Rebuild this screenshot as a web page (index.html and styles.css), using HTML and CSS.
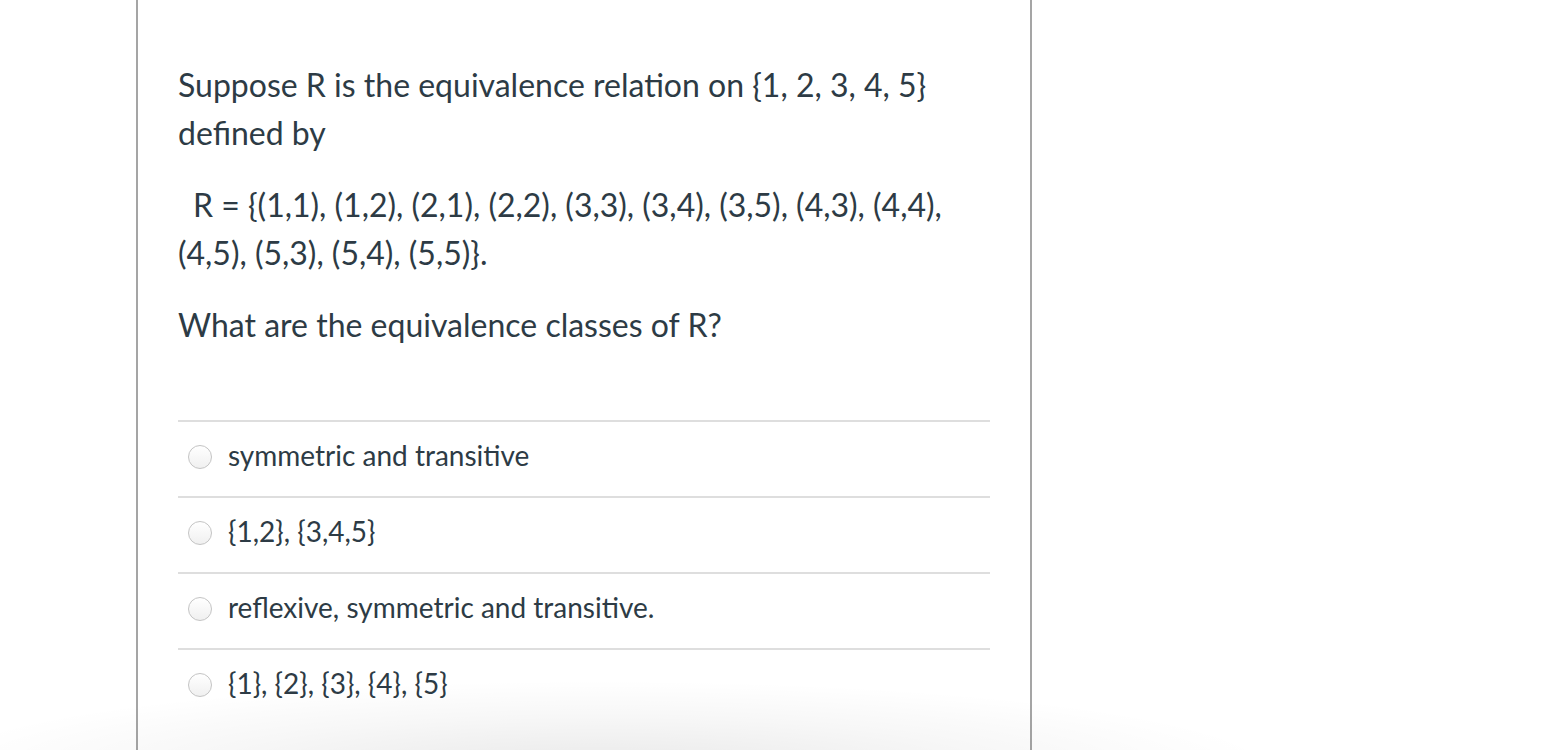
FILE: index.html
```html
<!DOCTYPE html>
<html>
<head>
<meta charset="utf-8">
<link rel="stylesheet" href="styles.css">
</head>
<body>
<div class="page">
  <div class="card">
    <div class="question">
      <p>Suppose R is the equivalence relation on {1, 2, 3, 4, 5} defined by</p>
      <p class="indent">R = {(1,1), (1,2), (2,1), (2,2), (3,3), (3,4), (3,5), (4,3), (4,4), (4,5), (5,3), (5,4), (5,5)}.</p>
      <p>What are the equivalence classes of R?</p>
    </div>
    <div class="answers">
      <label class="answer"><span class="radio"></span><span class="atext">symmetric and transitive</span></label>
      <label class="answer"><span class="radio"></span><span class="atext">{1,2}, {3,4,5}</span></label>
      <label class="answer"><span class="radio"></span><span class="atext">reflexive, symmetric and transitive.</span></label>
      <label class="answer"><span class="radio"></span><span class="atext">{1}, {2}, {3}, {4}, {5}</span></label>
    </div>
  </div>
  <div class="shade"></div>
</div>
</body>
</html>
```
FILE: styles.css
```css
html, body {
  margin: 0;
  padding: 0;
  background: #fff;
  height: 750px;
  overflow: hidden;
}
.page {
  position: relative;
  height: 750px;
  overflow: hidden;
  font-family: Lato, "Open Sans", sans-serif;
  color: #2d3b45;
}
.card {
  margin-left: 136px;
  width: 896px;
  height: 750px;
  box-sizing: border-box;
  border-left: 2px solid #a5a5a5;
  border-right: 2px solid #a5a5a5;
  padding: 61px 40px 0 40px;
}
.question p {
  margin: 0 0 24px 0;
  font-size: 32px;
  line-height: 48px;
}
.question p.indent {
  text-indent: 15px;
}
.answers {
  margin-top: 71px;
}
.answer {
  display: flex;
  align-items: center;
  height: 74px;
  border-top: 2px solid #dedede;
  font-size: 28px;
}
.answer .atext {
  position: relative;
  top: -4px;
}
.answer .radio {
  position: relative;
  top: -2px;
}
.radio {
  width: 22px;
  height: 22px;
  border-radius: 50%;
  border: 1px solid #c4c4c4;
  background: linear-gradient(#ffffff, #f0f0f0);
  margin-left: 10px;
  margin-right: 16px;
  flex: none;
}
.atext {
  line-height: 34px;
}
.shade {
  position: absolute;
  left: 0;
  bottom: 0;
  width: 100%;
  height: 90px;
  pointer-events: none;
  background: radial-gradient(ellipse 680px 90px at 600px 110px, rgba(0,0,0,0.09), rgba(0,0,0,0.03) 60%, rgba(0,0,0,0) 100%);
}
```
